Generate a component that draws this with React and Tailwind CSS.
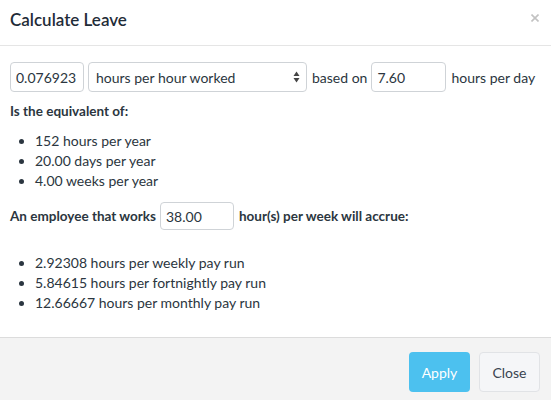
import React from "react";

const Field = ({ value, className = "" }) => (
  <input
    readOnly
    value={value}
    className={`h-[30px] rounded-[4px] border border-[#cfd3d7] bg-white px-[5px] text-[14px] text-[#2b3640] outline-none ${className}`}
  />
);

const App = () => {
  const yearly = ["152 hours per year", "20.00 days per year", "4.00 weeks per year"];
  const payRuns = [
    "2.92308 hours per weekly pay run",
    "5.84615 hours per fortnightly pay run",
    "12.66667 hours per monthly pay run",
  ];

  return (
    <div
      className="w-[551px] h-[400px] bg-white text-[#2b3640] flex flex-col"
      style={{ fontFamily: "Lato, 'Open Sans', sans-serif" }}
    >
      {/* Header */}
      <div className="h-[46px] flex items-center justify-between border-b border-[#e5e5e5] pl-[10px] pr-[12px]">
        <h2 className="text-[17px] font-semibold text-[#1f2c38] -mt-[5px]">Calculate Leave</h2>
        <svg width="8" height="8" viewBox="0 0 8 8" className="-mt-[10px]">
          <path d="M0.5 0.5 L7.5 7.5 M7.5 0.5 L0.5 7.5" stroke="#c2c2c2" strokeWidth="1.6" />
        </svg>
      </div>

      {/* Body */}
      <div className="flex-1 px-[10px] pt-[16px] text-[14px]">
        <div className="flex items-center h-[30px]">
          <Field value="0.076923" className="w-[74px]" />
          <div className="ml-[4px] w-[219px] h-[30px] rounded-[4px] border border-[#cfd3d7] bg-white flex items-center justify-between pl-[7px] pr-[6px]">
            <span>hours per hour worked</span>
            <svg width="7" height="12" viewBox="0 0 7 12">
              <path d="M3.5 0.5 L6.5 5 H0.5 Z" fill="#444" />
              <path d="M3.5 11.5 L6.5 7 H0.5 Z" fill="#444" />
            </svg>
          </div>
          <span className="ml-[5px]">based on</span>
          <Field value="7.60" className="ml-[4px] w-[75px]" />
          <span className="ml-[5px]">hours per day</span>
        </div>

        <p className="mt-[9px] leading-[20px] font-bold text-[13.5px]">Is the equivalent of:</p>
        <ul className="mt-[10px] list-disc pl-[25px]">
          {yearly.map((t) => (
            <li key={t} className="leading-[20px]">{t}</li>
          ))}
        </ul>

        <div className="mt-[11px] flex items-center h-[28px] font-bold text-[13.5px]">
          <span>An employee that works</span>
          <Field value="38.00" className="ml-[4px] w-[74px] !h-[28px] font-normal" />
          <span className="ml-[5px]">hour(s) per week will accrue:</span>
        </div>
        <ul className="mt-[23px] list-disc pl-[25px]">
          {payRuns.map((t) => (
            <li key={t} className="leading-[20px]">{t}</li>
          ))}
        </ul>
      </div>

      {/* Footer */}
      <div className="h-[63px] border-t border-[#dcdcdc] bg-[#f3f3f3] flex justify-end items-start pt-[14px] pr-[11px] gap-[9px] text-[14px]">
        <button className="w-[61px] h-[40px] rounded-[4px] bg-[#4cc1ef] text-white">Apply</button>
        <button className="w-[61px] h-[40px] rounded-[4px] border border-[#e1e3e6] bg-[#f5f6f8] text-[#3a4450]">
          Close
        </button>
      </div>
    </div>
  );
};

export default App;
